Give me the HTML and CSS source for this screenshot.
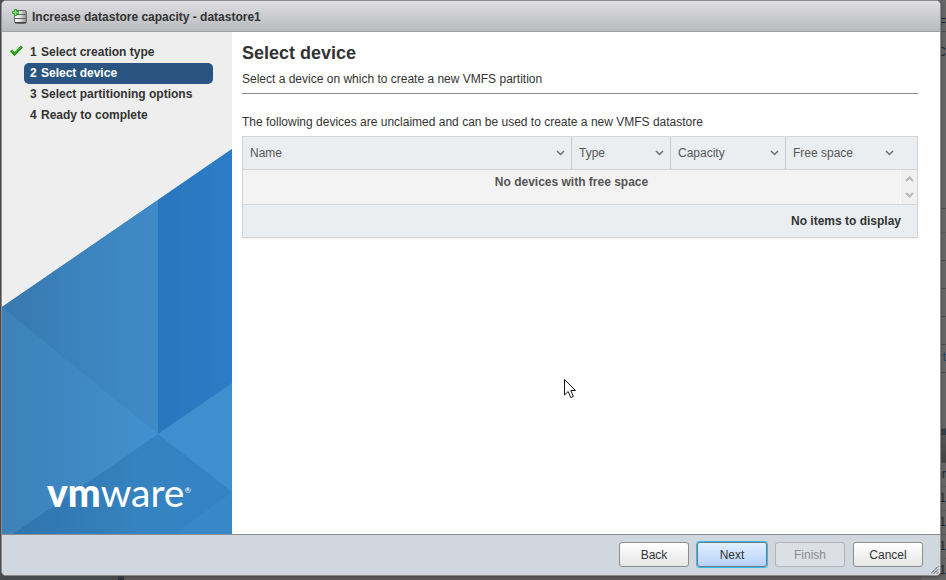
FILE: index.html
```html
<!DOCTYPE html>
<html lang="en">
	<head>
		<meta charset="UTF-8" />
		<meta name="viewport" content="width=device-width, initial-scale=1.0" />
		<title>Increase datastore capacity</title>
		<link rel="stylesheet" href="styles.css" />
	</head>
	<body>
		<!-- dimmed page behind the dialog -->
		<div class="backdrop" aria-hidden="true">
			<div class="back-row back-top">F</div>
			<div class="back-row back-actions">AC</div>
			<div class="back-row back-gap"></div>
			<div class="back-row back-small"></div>
			<div class="back-row"></div>
			<div class="back-row"></div>
			<div class="back-row"></div>
			<div class="back-row"></div>
			<div class="back-row back-link">t</div>
			<div class="back-row back-space"></div>
			<div class="back-row back-bar"></div>
			<div class="back-row back-small">or</div>
			<div class="back-row back-small">'1</div>
			<div class="back-row back-small">'1</div>
			<div class="back-row back-small">'1</div>
			<div class="back-row back-small">'1</div>
		</div>

		<div class="dialog" role="dialog" aria-labelledby="dialog-title">
			<header class="titlebar">
				<svg class="titlebar-icon" width="16" height="16" viewBox="0 0 16 16">
					<defs>
						<linearGradient id="disk" x1="0" x2="1">
							<stop offset="0" stop-color="#fff" />
							<stop offset="0.5" stop-color="#ddd" />
							<stop offset="1" stop-color="#888" />
						</linearGradient>
					</defs>
					<rect x="2.500" y="1.500" width="12" height="13" rx="2" fill="url(#disk)" stroke="#666" />
					<path d="M3 5.500h11M3 9.500h11" stroke="#666" />
					<path d="M3 13.500h11" stroke="#444" />
					<path d="M2.500 0.500h2v2h2v2h-2v2h-2v-2h-2v-2h2z" fill="#8ee07c" stroke="#2f9e35" />
				</svg>
				<span id="dialog-title">Increase datastore capacity - datastore1</span>
			</header>

			<div class="content">
				<aside class="sidebar">
					<ol class="steps">
						<li class="step">
							<svg class="check" width="13" height="11" viewBox="0 0 13 11">
								<path d="M1 5.500L4.500 9L12 1.500" fill="none" stroke="#1f9414" stroke-width="3" />
								<path d="M1.500 5.500L4.500 8.300L11.500 1.500" fill="none" stroke="#3fc030" stroke-width="1" />
							</svg>
							<a href="#"><span class="num">1</span>Select creation type</a>
						</li>
						<li class="step active">
							<a href="#" aria-current="step"><span class="num">2</span>Select device</a>
						</li>
						<li class="step">
							<a href="#"><span class="num">3</span>Select partitioning options</a>
						</li>
						<li class="step">
							<a href="#"><span class="num">4</span>Ready to complete</a>
						</li>
					</ol>
					<div class="brand">
						<svg class="brand-art" viewBox="0 0 230 385">
							<defs>
								<linearGradient id="mid" gradientUnits="userSpaceOnUse" x1="0" x2="156" y1="0" y2="0">
									<stop offset="0" stop-color="#3679ad" />
									<stop offset="0.5" stop-color="#3c83bd" />
									<stop offset="1" stop-color="#3f8bc7" />
								</linearGradient>
								<linearGradient id="left" gradientUnits="userSpaceOnUse" x1="0" x2="156" y1="0" y2="0">
									<stop offset="0" stop-color="#3b82b8" />
									<stop offset="0.5" stop-color="#3f88c3" />
									<stop offset="1" stop-color="#4291d0" />
								</linearGradient>
								<linearGradient id="base" gradientUnits="userSpaceOnUse" x1="10" x2="230" y1="0" y2="0">
									<stop offset="0" stop-color="#3074ae" />
									<stop offset="0.6" stop-color="#3583c0" />
									<stop offset="1" stop-color="#3582c4" />
								</linearGradient>
								<linearGradient id="top" x1="0" x2="1">
									<stop offset="0" stop-color="#2877bd" />
									<stop offset="1" stop-color="#2c7cc7" />
								</linearGradient>
							</defs>
							<path d="M0 158L230 0V385H0z" fill="url(#base)" />
							<path d="M0 158L156 51V285z" fill="url(#mid)" />
							<path d="M156 51L230 0V234L156 285z" fill="url(#top)" />
							<path d="M0 158L156 285L11 385H0z" fill="url(#left)" />
							<path d="M156 285L230 234V343z" fill="#3f8ecd" />
							<path d="M172 385L230 343V385z" fill="#3888c7" />
						</svg>
						<div class="logo"><b>vm</b>ware<sup>®</sup></div>
					</div>
				</aside>

				<main class="main">
					<h1>Select device</h1>
					<p class="subtitle">Select a device on which to create a new VMFS partition</p>
					<p class="hint">The following devices are unclaimed and can be used to create a new VMFS datastore</p>

					<table class="devices">
						<colgroup>
							<col />
							<col class="col-type" />
							<col class="col-capacity" />
							<col class="col-free" />
						</colgroup>
						<thead>
							<tr>
								<th scope="col">
									<div class="th-inner">Name
										<svg width="9" height="6" viewBox="0 0 9 6"><path d="M1 1L4.500 4.500L8 1" /></svg>
									</div>
								</th>
								<th scope="col">
									<div class="th-inner">Type
										<svg width="9" height="6" viewBox="0 0 9 6"><path d="M1 1L4.500 4.500L8 1" /></svg>
									</div>
								</th>
								<th scope="col">
									<div class="th-inner">Capacity
										<svg width="9" height="6" viewBox="0 0 9 6"><path d="M1 1L4.500 4.500L8 1" /></svg>
									</div>
								</th>
								<th scope="col" class="last">
									<div class="th-inner">Free space
										<svg width="9" height="6" viewBox="0 0 9 6"><path d="M1 1L4.500 4.500L8 1" /></svg>
									</div>
								</th>
							</tr>
						</thead>
						<tbody>
							<tr>
								<td colspan="4">
									<div class="empty">
										<span class="empty-text">No devices with free space</span>
										<div class="scroll">
											<svg width="9" height="6" viewBox="0 0 9 6"><path d="M1 5L4.500 1.500L8 5" /></svg>
											<svg width="9" height="6" viewBox="0 0 9 6"><path d="M1 1L4.500 4.500L8 1" /></svg>
										</div>
									</div>
								</td>
							</tr>
						</tbody>
						<tfoot>
							<tr>
								<td colspan="4">No items to display</td>
							</tr>
						</tfoot>
					</table>
				</main>
			</div>

			<footer class="buttons">
				<button type="button">Back</button>
				<button type="button" class="next">Next</button>
				<button type="button" disabled>Finish</button>
				<button type="button">Cancel</button>
				<svg class="grip" width="8" height="8" viewBox="0 0 8 8">
					<path d="M0 7.500L7.500 0M3 7.500L7.500 3M6 7.500L7.500 6" stroke="#333" stroke-dasharray="1.500 0.500" />
				</svg>
			</footer>
		</div>

		<svg class="cursor" width="13" height="20" viewBox="0 0 13 20">
			<path d="M0.500 0.500V16L4.200 12.500L6.700 18.500L9.300 17.500L6.800 11.500H11.500z" fill="#fff" stroke="#15151f" />
		</svg>
	</body>
</html>
```

FILE: styles.css
```css
* {
	box-sizing: border-box;
	margin: 0;
	padding: 0;
}
body {
	height: 100vh;
	overflow: hidden;
	background: linear-gradient(90deg, #4c4d50 118px, #2b2f38 118px 124px, #5e5a5b 124px);
	color: #333;
	font-family: "Liberation Sans", Arial, Helvetica, sans-serif;
	font-size: 12px;
	line-height: 16px;
}

/* page behind */
.backdrop {
	display: flex;
	flex-direction: column;
	width: 24px;
	height: 100%;
	margin-left: auto;
	overflow: hidden;
	background: #666566;
	color: #222;
	text-align: right;
}
.back-row {
	flex: none;
	height: 28px;
	border-bottom: 1px solid #4c4c4c;
	white-space: nowrap;
}
.back-top {
	height: 32px;
	padding-top: 15px;
}
.back-actions {
	height: 24px;
	padding-top: 12px;
	border: none;
}
.back-gap {
	height: 153px;
}
.back-link {
	padding-top: 4px;
	color: #24435f;
}
.back-space {
	height: 56px;
}
.back-bar {
	height: 34px;
	border-top: 6px solid #2f3d49;
	background: linear-gradient(#555, #444);
}
.back-small {
	height: 24px;
	padding-top: 3px;
	border-bottom-color: #5a5a5a;
}

/* dialog */
.dialog {
	position: absolute;
	inset: 0 5px 4px 1px;
	display: flex;
	flex-direction: column;
	overflow: hidden;
	border: 1px solid #8c8c8c;
	border-radius: 5px;
	background: #fff;
	box-shadow: 0 1px 3px #444;
}
.titlebar {
	display: flex;
	align-items: center;
	gap: 4px;
	height: 31px;
	padding: 1px 0 0 10px;
	border-bottom: 1px solid #a0a0a4;
	background: linear-gradient(#dedee1, #b9babe);
	font-weight: bold;
}
.content {
	flex: 1;
	display: flex;
	min-height: 0;
}

/* sidebar */
.sidebar {
	flex: none;
	display: flex;
	flex-direction: column;
	justify-content: space-between;
	width: 230px;
	background: #eee;
}
.steps {
	padding: 10px 19px 0 22px;
	list-style: none;
}
.step {
	position: relative;
	height: 21px;
	padding-left: 6px;
	border-radius: 5px;
	font-weight: bold;
	line-height: 21px;
}
.step a {
	display: flex;
	color: #333;
	text-decoration: none;
}
.num {
	width: 11px;
}
.active {
	background: #2a5582;
}
.active a {
	color: #fff;
}
.check {
	position: absolute;
	top: 3px;
	left: -14px;
}
.brand {
	position: relative;
}
.brand-art {
	display: block;
	width: 100%;
}
.logo {
	position: absolute;
	bottom: 20px;
	left: 45px;
	color: #fff;
	font-family: Lato, sans-serif;
	font-size: 39px;
	line-height: 44px;
	white-space: nowrap;
}
.logo b {
	font-weight: 900;
}
.logo sup {
	font-size: 8px;
	line-height: 8px;
	vertical-align: 14px;
}

/* wizard page */
.main {
	flex: 1;
	min-width: 0;
	padding: 10px 22px 0 10px;
}
h1 {
	font-size: 18px;
	line-height: 22px;
}
.subtitle {
	padding: 7px 0 6px;
	border-bottom: 1px solid #8c8c8c;
}
.hint {
	padding: 20px 0 6px;
}
.devices {
	width: 100%;
	border: 1px solid #d3d5d6;
	border-collapse: separate;
	border-spacing: 0;
	table-layout: fixed;
	background: #eaeef1;
	box-shadow: 0 1px 2px #eee;
}
.col-type {
	width: 99px;
}
.col-capacity {
	width: 115px;
}
.col-free {
	width: 132px;
}
th {
	height: 32px;
	padding: 0 6px 0 7px;
	color: #565656;
	font-weight: normal;
	text-align: left;
}
th + th {
	border-left: 1px solid #c8cbcd;
}
th.last {
	padding-right: 23px;
}
.th-inner {
	display: flex;
	align-items: center;
	justify-content: space-between;
}
.devices path {
	fill: none;
	stroke: #6a6e72;
	stroke-width: 1.5;
}
tbody td {
	border: solid #d3d5d6;
	border-width: 1px 0;
	background: #f3f3f3;
}
.empty {
	display: flex;
	height: 34px;
}
.empty-text {
	flex: 1;
	padding-top: 4px;
	color: #555;
	font-weight: bold;
	text-align: center;
}
.scroll {
	display: flex;
	flex-direction: column;
	align-items: center;
	justify-content: space-between;
	width: 17px;
	padding: 6px 0;
	border-left: 1px solid #fff;
	background: #f0f0f0;
}
.devices .scroll path {
	stroke: #b8b8b8;
	stroke-width: 2;
}
tfoot td {
	height: 32px;
	padding-right: 16px;
	font-weight: bold;
	text-align: right;
}

/* footer */
.buttons {
	position: relative;
	display: flex;
	justify-content: flex-end;
	gap: 8px;
	padding: 7px 17px 8px;
	border-top: 1px solid #8c8f94;
	background: #d0d7df;
}
button {
	width: 70px;
	height: 25px;
	border: 1px solid #8f8f8f;
	border-radius: 3px;
	background: linear-gradient(#fff, #e6e6e6);
	color: #333;
	font-family: inherit;
	font-size: 12px;
}
.next {
	border-color: #6c7882;
	background: linear-gradient(#e2f0ff, #b8d2fb);
	box-shadow: 0 0 0 1px #35bdf0;
}
button:disabled {
	border-color: #b0b4b9;
	background: #dce0e5;
	color: #8b8e92;
}
.grip {
	position: absolute;
	right: 1px;
	bottom: 1px;
}
.cursor {
	position: absolute;
	top: 379px;
	left: 564px;
}
```
